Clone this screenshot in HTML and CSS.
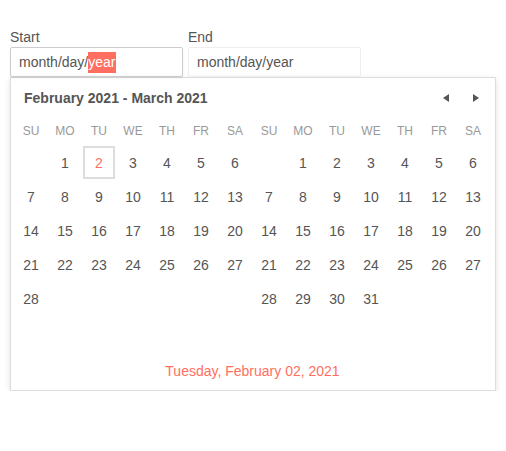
FILE: index.html
```html
<!DOCTYPE html>
<html lang="en">
<head>
  <meta charset="UTF-8" />
  <meta name="viewport" content="width=device-width, initial-scale=1.0"/>
  <title>Date range picker</title>
  <link rel="stylesheet" href="styles.css">
</head>
<body>

  <div class="range">
    <div class="field">
      <label>Start</label>
      <div class="input focused">month/day/<span class="sel">year</span></div>
    </div>
    <div class="field">
      <label>End</label>
      <div class="input">month/day/year</div>
    </div>
  </div>

  <!-- Kalender popup -->
  <div class="popup">
    <div class="popup-head">
      <span class="title">February 2021 - March 2021</span>
      <span class="nav">
        <span class="arrow left"></span>
        <span class="arrow right"></span>
      </span>
    </div>

    <div class="months">
      <div class="month" id="feb"></div>
      <div class="month" id="mar"></div>
    </div>

    <div class="popup-foot">Tuesday, February 02, 2021</div>
  </div>

  <script>
    const days = ["SU", "MO", "TU", "WE", "TH", "FR", "SA"];

    function buildMonth(el, firstDay, length, selected) {
      days.forEach(d => {
        const c = document.createElement("div");
        c.className = "wd";
        c.textContent = d;
        el.appendChild(c);
      });
      for (let i = 0; i < 42; i++) {
        const c = document.createElement("div");
        c.className = "day";
        const n = i - firstDay + 1;
        if (n >= 1 && n <= length) {
          c.textContent = n;
          if (n === selected) c.classList.add("selected");
        }
        el.appendChild(c);
      }
    }

    buildMonth(document.getElementById("feb"), 1, 28, 2);
    buildMonth(document.getElementById("mar"), 1, 31, 0);
  </script>

</body>
</html>
```

FILE: styles.css
```css
* {
  margin: 0;
  padding: 0;
  box-sizing: border-box;
}

body {
  font-family: "Liberation Sans", Arial, sans-serif;
  background-color: #fff;
  color: #555;
  padding: 29px 10px 0 10px;
}

.range {
  display: flex;
  gap: 5px;
}

.field label {
  display: block;
  font-size: 14px;
  line-height: 16px;
  color: #555;
  margin-bottom: 2px;
}

.input {
  width: 173px;
  height: 30px;
  border: 1px solid #eee;
  border-radius: 2px;
  font-size: 14px;
  line-height: 28px;
  padding-left: 8px;
  color: #555;
}

.input.focused {
  border-color: #ccc;
  box-shadow: 0 1px 2px rgba(0, 0, 0, 0.08);
}

.input .sel {
  background-color: #ff6f61;
  color: #fff;
  padding: 2px 0 3px 0;
}

.popup {
  width: 486px;
  height: 314px;
  border: 1px solid #ddd;
  box-shadow: 0 2px 6px rgba(0, 0, 0, 0.12);
  padding: 0 4px 0 3px;
  display: flex;
  flex-direction: column;
}

.popup-head {
  height: 38px;
  display: flex;
  align-items: center;
  justify-content: space-between;
  padding: 1px 0 0 10px;
}

.title {
  font-size: 14px;
  font-weight: bold;
  color: #555;
}

.nav {
  display: flex;
  gap: 24px;
  padding-right: 12px;
}

.arrow {
  width: 0;
  height: 0;
  border-top: 4px solid transparent;
  border-bottom: 4px solid transparent;
}

.arrow.left {
  border-right: 6px solid #555;
}

.arrow.right {
  border-left: 6px solid #555;
}

.months {
  display: flex;
}

.month {
  display: grid;
  grid-template-columns: repeat(7, 34px);
  grid-auto-rows: 34px;
  grid-template-rows: 30px;
}

.wd {
  font-size: 12px;
  color: #999;
  display: flex;
  align-items: center;
  justify-content: center;
}

.day {
  font-size: 14px;
  color: #555;
  display: flex;
  align-items: center;
  justify-content: center;
}

.day.selected {
  color: #ff6f61;
  border: 2px solid #ddd;
  margin: 0 1px 1px 1px;
}

.popup-foot {
  flex: 1;
  display: flex;
  align-items: center;
  justify-content: center;
  font-size: 14px;
  color: #ff6f61;
  padding-top: 2px;
}
```
